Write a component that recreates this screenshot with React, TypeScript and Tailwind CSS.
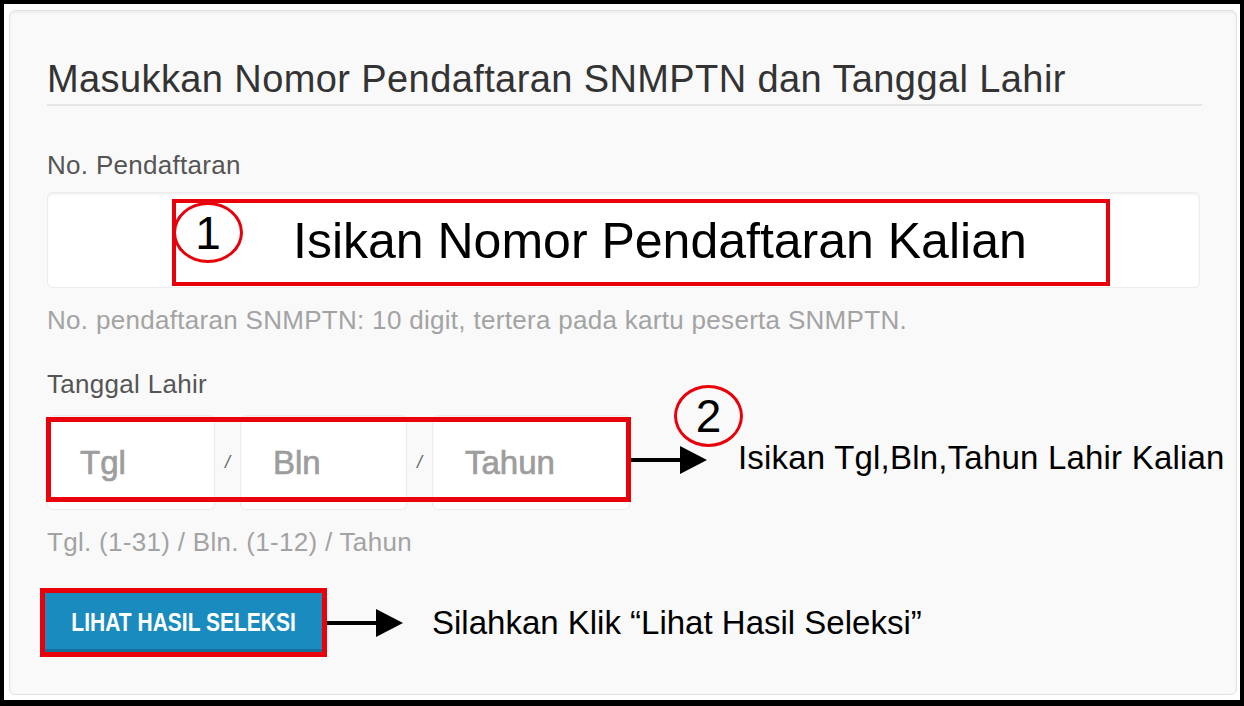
const FONT = "font-['Liberation_Sans',Arial,sans-serif]";

function Arrow() {
  return (
    <svg width="76" height="30" viewBox="0 0 76 30">
      <line x1="0" y1="15" x2="52" y2="15" stroke="#000" strokeWidth="4" />
      <polygon points="49,1 76,15 49,29" fill="#000" />
    </svg>
  );
}

function Step({ n, className }: { n: string; className: string }) {
  return (
    <div
      className={`absolute flex items-center justify-center rounded-[50%] border-[3px] border-[#e8000b] text-[46px] leading-none text-black ${className}`}
    >
      {n}
    </div>
  );
}

function DateInput({ placeholder, width }: { placeholder: string; width: string }) {
  return (
    <div
      className={`flex h-[95px] ${width} items-center rounded-[6px] border border-[#ececec] bg-white pl-[32px] shadow-[inset_0_2px_2px_rgba(0,0,0,0.05)]`}
    >
      <span className="text-[33px] leading-none text-[#9d9d9d] [-webkit-text-stroke:0.7px_#9d9d9d]">{placeholder}</span>
    </div>
  );
}

function Slash() {
  return <div className="flex w-[25px] justify-center text-[18px] italic text-[#666]">/</div>;
}

export default function App() {
  return (
    <div
      className={`${FONT} h-[706px] w-[1244px] overflow-hidden border-x-4 border-t-4 border-b-[6px] border-black bg-white pt-[6px] pr-[3px] pb-[5px] pl-[5px]`}
    >
      <div className="h-[685px] w-[1228px] rounded-[6px] border border-[#e3e3e3] bg-[#f9f9f9] pt-[49px] pr-[34px] pl-[37px] shadow-[inset_0_2px_3px_rgba(0,0,0,0.05)]">
        <h2 className="border-b-2 border-[#e6e6e6] pb-[6px] text-[38px] leading-[38px] tracking-[0.4px] text-[#333]">
          Masukkan Nomor Pendaftaran SNMPTN dan Tanggal Lahir
        </h2>

        <div className="mt-[46px] text-[26px] leading-[26px] tracking-[0.3px] text-[#555]">No. Pendaftaran</div>

        <div className="relative mt-[14px] h-[96px] w-[1153px] rounded-[6px] border border-[#ececec] bg-white shadow-[inset_0_2px_2px_rgba(0,0,0,0.05)]">
          <div className="absolute top-[6px] left-[124px] h-[87px] w-[938px] border-[4px] border-[#e8000b]" />
          <Step n="1" className="top-[9px] left-[125px] h-[61px] w-[70px]" />
          <span className="absolute top-[23px] left-[245px] text-[50px] leading-[50px] text-black">
            Isikan Nomor Pendaftaran Kalian
          </span>
        </div>

        <div className="mt-[19px] text-[26px] leading-[26px] tracking-[0.3px] text-[#a3a3a3]">
          No. pendaftaran SNMPTN: 10 digit, tertera pada kartu peserta SNMPTN.
        </div>

        <div className="mt-[38px] text-[26px] leading-[26px] tracking-[0.3px] text-[#555]">Tanggal Lahir</div>

        <div className="relative mt-[18px] flex items-center">
          <DateInput placeholder="Tgl" width="w-[168px]" />
          <Slash />
          <DateInput placeholder="Bln" width="w-[167px]" />
          <Slash />
          <DateInput placeholder="Tahun" width="w-[198px]" />

          <div className="absolute top-[2px] left-[-1px] h-[85px] w-[585px] border-[5px] border-[#e8000b]" />
          <div className="absolute top-[30px] left-[584px]">
            <Arrow />
          </div>
          <Step n="2" className="top-[-30px] left-[627px] h-[62px] w-[69px]" />
          <span className="absolute top-[26px] left-[691px] text-[33px] leading-[33px] tracking-[0.2px] whitespace-nowrap text-black">
            Isikan Tgl,Bln,Tahun Lahir Kalian
          </span>
        </div>

        <div className="mt-[19px] text-[26px] leading-[26px] tracking-[0.3px] text-[#a3a3a3]">
          Tgl. (1-31) / Bln. (1-12) / Tahun
        </div>

        <div className="mt-[33px] ml-[-7px] flex items-center">
          <div className="border-[5px] border-[#e8000b]">
            <button className="flex h-[59px] w-[277px] items-center justify-center border-b-[3px] border-[#16729c] bg-[#1a8bbe] pt-[3px] text-white">
              <span className="inline-block scale-x-[0.84] text-[25px] font-bold whitespace-nowrap">
                LIHAT HASIL SELEKSI
              </span>
            </button>
          </div>
          <Arrow />
          <span className="ml-[29px] text-[33px] leading-[33px] whitespace-nowrap text-black">
            Silahkan Klik “Lihat Hasil Seleksi”
          </span>
        </div>
      </div>
    </div>
  );
}
